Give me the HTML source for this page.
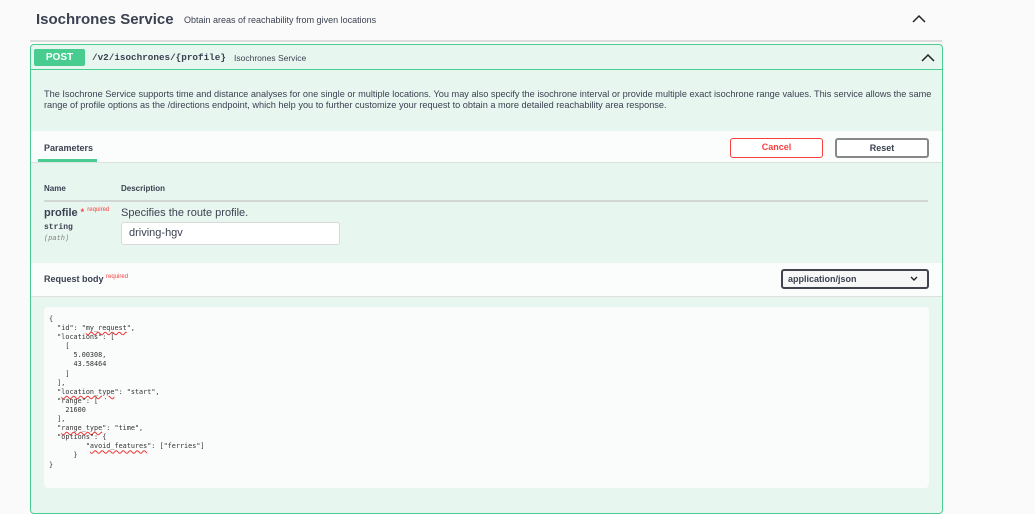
<!DOCTYPE html>
<html><head><meta charset="utf-8"><style>
*{box-sizing:border-box;margin:0;padding:0}
body{width:1035px;height:499px;overflow:hidden;background:#fafafa;font-family:"Liberation Sans",sans-serif;color:#3b4151;position:relative}
.abs{position:absolute}
.title{left:36px;top:11px;font-size:15px;font-weight:bold;color:#3b4151}
.sub{left:184px;top:15px;font-size:9px;color:#3b4151}
.sep{left:30px;top:40px;width:912px;height:2px;background:#dcdcdc}
.op{left:30px;top:44px;width:913px;height:470px;border:1px solid #49cc90;border-radius:4px;background:#e8f6f0}
.hdr{left:31px;top:45px;width:911px;height:25px;border-bottom:1px solid #49cc90}
.post{left:34px;top:49px;width:51px;height:17px;background:#49cc90;border-radius:2px;color:#fff;font-weight:bold;font-size:10px;text-align:center;line-height:17px}
.path{left:92px;top:52px;font-family:"Liberation Mono",monospace;font-weight:bold;font-size:9.3px}
.psum{left:234px;top:53px;font-size:8.5px}
.desc{left:44px;top:89px;font-size:9.2px;line-height:10.5px;width:898px}
.bar{left:31px;top:131px;width:911px;height:32px;background:#fbfcfc;border-bottom:1px solid #dde2e0}
.tab{left:44px;top:143px;font-size:9px;font-weight:bold}
.tabline{left:38px;top:159px;width:59px;height:3px;background:#49cc90}
.btn{height:20px;border:2px solid #888;border-radius:3px;font-size:9px;font-weight:bold;text-align:center;line-height:16px;background:#fff}
.th{top:184px;font-size:8px;font-weight:bold}
.hl{left:44px;top:200px;width:884px;height:2px;background:#d2d7d5}
.rb{left:31px;top:263px;width:911px;height:34px;background:#fbfcfc;border-bottom:1px solid #dde2e0}
.code{left:44px;top:307px;width:885px;height:181px;background:#fafbfb;border-radius:4px;font-family:"DejaVu Sans Mono",monospace;font-size:6.8px;line-height:9.1px;padding:8px 5px;white-space:pre;color:#333}
u{text-decoration:underline wavy #e33;text-decoration-thickness:1px}
</style></head><body>
<div class="abs title">Isochrones Service</div>
<div class="abs sub">Obtain areas of reachability from given locations</div>
<svg class="abs" style="left:912px;top:14px" width="14" height="9"><path d="M1 8L7 2L13 8" stroke="#222" stroke-width="1.5" fill="none"/></svg>
<div class="abs sep"></div>
<div class="abs op"></div>
<div class="abs hdr"></div>
<div class="abs post">POST</div>
<div class="abs path">/v2/isochrones/{profile}</div>
<div class="abs psum">Isochrones Service</div>
<svg class="abs" style="left:921px;top:53px" width="14" height="9"><path d="M1 8L7 2L13 8" stroke="#222" stroke-width="1.5" fill="none"/></svg>
<div class="abs desc">The Isochrone Service supports time and distance analyses for one single or multiple locations. You may also specify the isochrone interval or provide multiple exact isochrone range values. This service allows the same range of profile options as the /directions endpoint, which help you to further customize your request to obtain a more detailed reachability area response.</div>
<div class="abs bar"></div>
<div class="abs tab">Parameters</div>
<div class="abs tabline"></div>
<div class="abs btn" style="left:730px;top:138px;width:93px;border-color:#f93e3e;color:#f93e3e;border-width:1.5px">Cancel</div>
<div class="abs btn" style="left:835px;top:138px;width:94px">Reset</div>
<div class="abs th" style="left:44px">Name</div>
<div class="abs th" style="left:121px">Description</div>
<div class="abs hl"></div>
<div class="abs" style="left:44px;top:207px;font-size:11px;font-weight:bold">profile <span style="color:#f93e3e;font-size:9px;vertical-align:top">*</span> <span style="color:#f93e3e;font-size:6px;font-weight:normal;vertical-align:top">required</span></div>
<div class="abs" style="left:44px;top:223px;font-family:'Liberation Mono',monospace;font-size:8px;font-weight:bold">string</div>
<div class="abs" style="left:44px;top:235px;font-family:'Liberation Mono',monospace;font-size:7px;font-style:italic;color:#808080">(path)</div>
<div class="abs" style="left:121px;top:207px;font-size:11px">Specifies the route profile.</div>
<div class="abs" style="left:121px;top:222px;width:219px;height:23px;background:#fff;border:1px solid #d9d9d9;border-radius:3px;font-size:11px;padding:4px 7px">driving-hgv</div>
<div class="abs rb"></div>
<div class="abs" style="left:44px;top:274px;font-size:9px;font-weight:bold">Request body <span style="color:#f93e3e;font-size:6px;font-weight:normal;vertical-align:top">required</span></div>
<div class="abs" style="left:781px;top:269px;width:148px;height:20px;border:2px solid #41444e;border-radius:3px;background:#f7f7f7;font-size:9px;font-weight:bold;padding:3px 5px">application/json</div>
<svg class="abs" style="left:910px;top:276px" width="8" height="6"><path d="M1 1L4 4L7 1" stroke="#222" stroke-width="1.4" fill="none"/></svg>
<div class="abs code">{
  "id": "<u>my_request</u>",
  "locations": [
    [
      5.00308,
      43.58464
    ]
  ],
  "<u>location_type</u>": "start",
  "range": [
    21600
  ],
  "<u>range_type</u>": "time",
  "options": {
         "<u>avoid_features</u>": ["ferries"]
      }
}</div>
</body></html>
